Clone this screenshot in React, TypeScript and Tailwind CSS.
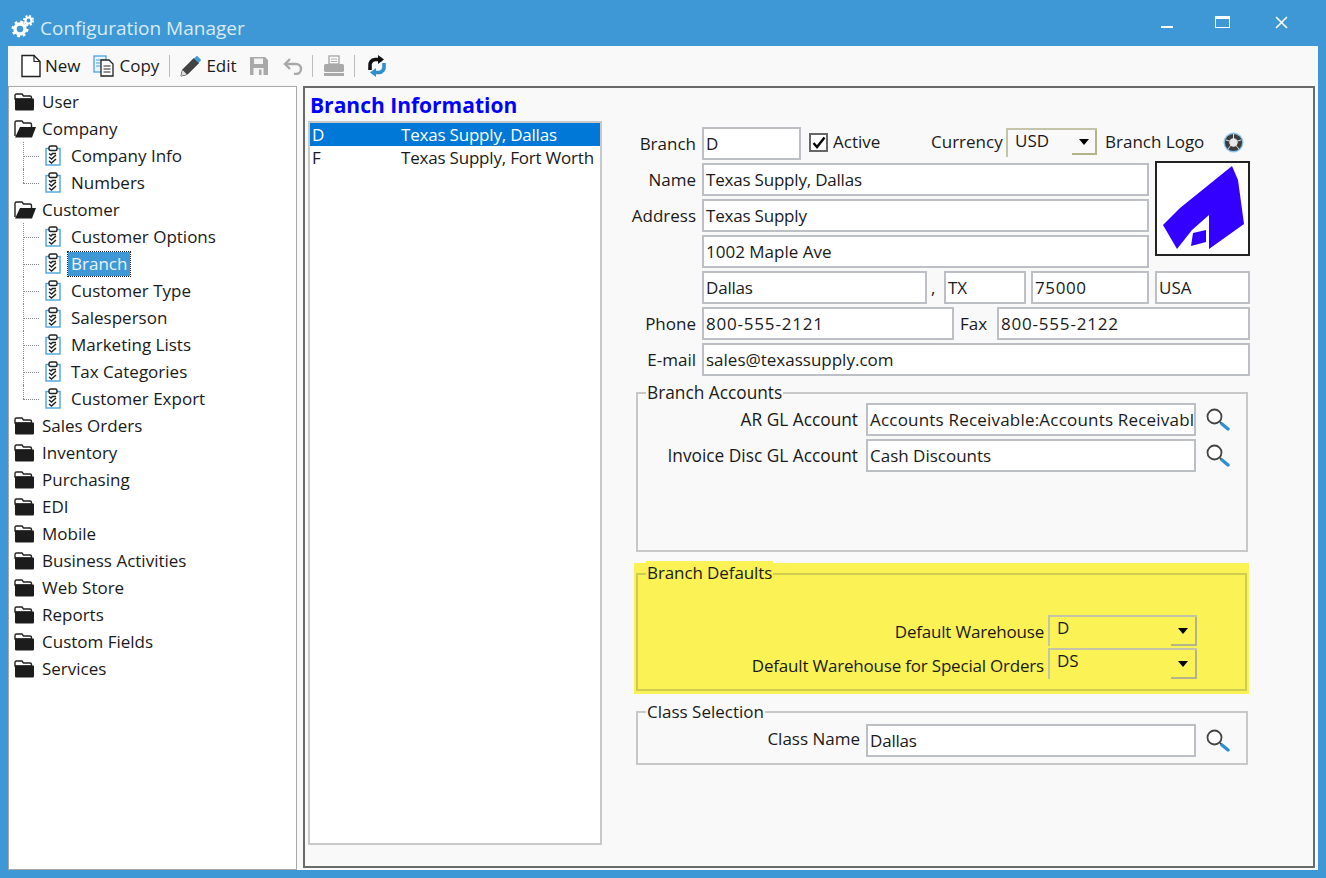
import type { ReactNode } from "react";

const font = { fontFamily: '"Open Sans", "Noto Sans", sans-serif' };

function FolderClosed() {
	return (
		<svg width="21" height="20" viewBox="0 0 21 20" className="shrink-0">
			<path d="M1 5V3.5C1 2.5 1.6 2 2.5 2H8l1.5 2H16c1 0 1.5.5 1.5 1.5V7H1z" fill="#fff" stroke="#222" strokeWidth="1.4" />
			<path d="M1 6.5h18c.6 0 1 .4 1 1V17c0 1-.6 1.5-1.5 1.5h-16C1.6 18.5 1 18 1 17z" fill="#1c1c1c" />
		</svg>
	);
}

function FolderOpen() {
	return (
		<svg width="23" height="20" viewBox="0 0 23 20" className="shrink-0">
			<path d="M1 17V3.5C1 2.5 1.6 2 2.5 2H8l1.5 2H16c1 0 1.5.5 1.5 1.5V8" fill="#fff" stroke="#222" strokeWidth="1.4" />
			<path d="M6 8h16l-4 10.5H1z" fill="#1c1c1c" />
		</svg>
	);
}

function Clipboard() {
	return (
		<svg width="16" height="21" viewBox="0 0 16 21" className="shrink-0">
			<rect x="1" y="3.5" width="14" height="16.5" fill="#fff" stroke="#4aa3df" strokeWidth="1.4" />
			<rect x="4" y="1" width="8" height="4.5" rx="1.5" fill="#fff" stroke="#222" strokeWidth="1.4" />
			<path d="M4 8.5l2 1.5 1.5-1.5h3.5M4 12l2.5 2L11 10M4 16l2.5 2L11 14" fill="none" stroke="#222" strokeWidth="1.5" />
		</svg>
	);
}

function SearchIcon() {
	return (
		<svg width="25" height="25" viewBox="0 0 25 25" className="shrink-0">
			<circle cx="9.5" cy="9.5" r="7" fill="#fff" stroke="#444" strokeWidth="1.8" />
			<path d="M15 15l2.5 2.5" stroke="#444" strokeWidth="2" />
			<path d="M17 17l6 5" stroke="#2f8fd0" strokeWidth="3.4" strokeLinecap="round" />
		</svg>
	);
}

function Gears() {
	return (
		<svg width="23" height="24" viewBox="0 0 23 24" className="mt-[6px]">
			<g fill="none" stroke="#fff">
				<circle cx="9" cy="15" r="5" strokeWidth="3.4" />
				<circle cx="9" cy="15" r="7.2" strokeWidth="2.6" strokeDasharray="2.8 2.85" />
				<circle cx="17.5" cy="6.5" r="3" strokeWidth="2.2" />
				<circle cx="17.5" cy="6.5" r="4.7" strokeWidth="1.8" strokeDasharray="2 1.7" />
			</g>
		</svg>
	);
}

function Sep() {
	return <div className="w-px h-[22px] bg-[#bdbdbd] shrink-0" />;
}

function Toolbar() {
	return (
		<div className="h-10 flex items-center text-[17px] text-[#1a1a1a] shrink-0 pl-3">
			<svg width="22" height="24" viewBox="0 0 22 24">
				<path d="M2 1.5h12l6 6v15H2z" fill="#fff" stroke="#222" strokeWidth="1.4" />
				<path d="M14 1.5v6h6" fill="none" stroke="#222" strokeWidth="1.2" />
			</svg>
			<span className="ml-[3px]">New</span>
			<svg width="22" height="22" viewBox="0 0 22 22" className="ml-[12px]">
				<rect x="1" y="1" width="12" height="16" fill="#eaf4fb" stroke="#4aa3df" strokeWidth="1.3" />
				<path d="M3 5h8M3 8h8M3 11h8" stroke="#4aa3df" />
				<path d="M8 5h8l4 4v12H8z" fill="#fff" stroke="#222" strokeWidth="1.3" />
				<path d="M10.5 11h7M10.5 14h7M10.5 17h7" stroke="#222" />
			</svg>
			<span className="ml-[5px]">Copy</span>
			<div className="ml-[10px]"><Sep /></div>
			<svg width="22" height="23" viewBox="0 0 22 23" className="ml-[9px]">
				<path d="M2 21l1.5-6L15 3.5l4.5 4.5L8 19.5z" fill="#444" stroke="#222" strokeWidth="1" />
				<path d="M15 3.5l1.8-1.8a1.6 1.6 0 0 1 2.3 0l2.2 2.2a1.6 1.6 0 0 1 0 2.3L19.5 8z" fill="#3f9bdc" />
				<path d="M2 21l1.5-6 4.5 4.5z" fill="#ddd" />
			</svg>
			<span className="ml-[5px]">Edit</span>
			<svg width="20" height="20" viewBox="0 0 20 20" className="ml-[12px]">
				<path d="M1 1h15l3 3v15H1z" fill="#a9a9a9" />
				<rect x="5" y="2.5" width="9" height="5.5" fill="#f5f5f5" />
				<rect x="4.5" y="12" width="10" height="7" fill="#f5f5f5" />
				<rect x="10" y="13.5" width="2.5" height="5.5" fill="#a9a9a9" />
			</svg>
			<svg width="20" height="18" viewBox="0 0 20 18" className="ml-[14px]">
				<path d="M7 2L2 7l5 5" fill="none" stroke="#a9a9a9" strokeWidth="2.4" />
				<path d="M2.5 7H13a5 5 0 0 1 0 10H11" fill="none" stroke="#a9a9a9" strokeWidth="2.4" />
			</svg>
			<div className="ml-[9px]"><Sep /></div>
			<svg width="22" height="22" viewBox="0 0 22 22" className="ml-[10px]">
				<rect x="6" y="1" width="10" height="8" fill="#fff" stroke="#a9a9a9" strokeWidth="1.4" />
				<path d="M8 4h6M8 6.5h6" stroke="#a9a9a9" />
				<rect x="1" y="9" width="20" height="8" rx="1.5" fill="#a9a9a9" />
				<rect x="1" y="18" width="20" height="3" fill="#a9a9a9" />
			</svg>
			<div className="ml-[9px]"><Sep /></div>
			<svg width="20" height="22" viewBox="0 0 20 22" className="ml-[12px]">
				<path d="M15 4.5H8a5.5 5.5 0 0 0-5 6.5v4" fill="none" stroke="#111" strokeWidth="3.6" />
				<path d="M11 0l6 4.5-6 4.5z" fill="#111" />
				<path d="M6 17.5h6a5.5 5.5 0 0 0 5-6.5V8" fill="none" stroke="#2f8fd0" strokeWidth="3.6" />
				<path d="M9 13l-6 4.5 6 4.5z" fill="#2f8fd0" />
			</svg>
		</div>
	);
}

function TreeRow({ label, kind, selected, last }: { label: string; kind: "closed" | "open" | "leaf"; selected?: boolean; last?: boolean }) {
	if (kind === "leaf") {
		return (
			<div className="h-[27px] flex items-center relative">
				{/* dotted tree connectors */}
				<div className={`absolute left-[14px] top-0 border-l border-dotted border-[#888] ${last ? "h-[14px]" : "h-[27px]"}`} />
				<div className="absolute left-[14px] top-[14px] w-[16px] border-t border-dotted border-[#888]" />
				<div className="ml-[36px] shrink-0"><Clipboard /></div>
				{selected ? (
					<span className="ml-[7px] px-[3px] leading-[24px] bg-[#3e98d5] text-[#e8f4fc] outline-1 outline-dotted outline-[#222]">{label}</span>
				) : (
					<span className="ml-[10px] leading-[24px]">{label}</span>
				)}
			</div>
		);
	}
	return (
		<div className="h-[27px] flex items-center pl-[5px]">
			<div className="w-[28px] shrink-0">{kind === "open" ? <FolderOpen /> : <FolderClosed />}</div>
			<span>{label}</span>
		</div>
	);
}

function Tree() {
	return (
		<div className="w-[289px] shrink-0 bg-white border border-[#a8a8a8] pt-[1px] text-[17px] text-[#1a1a1a]">
			<TreeRow kind="closed" label="User" />
			<TreeRow kind="open" label="Company" />
			<TreeRow kind="leaf" label="Company Info" />
			<TreeRow kind="leaf" label="Numbers" last />
			<TreeRow kind="open" label="Customer" />
			<TreeRow kind="leaf" label="Customer Options" />
			<TreeRow kind="leaf" label="Branch" selected />
			<TreeRow kind="leaf" label="Customer Type" />
			<TreeRow kind="leaf" label="Salesperson" />
			<TreeRow kind="leaf" label="Marketing Lists" />
			<TreeRow kind="leaf" label="Tax Categories" />
			<TreeRow kind="leaf" label="Customer Export" last />
			<TreeRow kind="closed" label="Sales Orders" />
			<TreeRow kind="closed" label="Inventory" />
			<TreeRow kind="closed" label="Purchasing" />
			<TreeRow kind="closed" label="EDI" />
			<TreeRow kind="closed" label="Mobile" />
			<TreeRow kind="closed" label="Business Activities" />
			<TreeRow kind="closed" label="Web Store" />
			<TreeRow kind="closed" label="Reports" />
			<TreeRow kind="closed" label="Custom Fields" />
			<TreeRow kind="closed" label="Services" />
		</div>
	);
}

function Field({ value, className }: { value?: string; className: string }) {
	return (
		<div className={`h-[33px] shrink-0 bg-white border-2 border-[#bcc0c4] px-[2px] flex items-center overflow-hidden whitespace-nowrap ${className}`}>
			{value}
		</div>
	);
}

function Label({ children, className }: { children: ReactNode; className: string }) {
	return <div className={`shrink-0 text-right whitespace-nowrap ${className}`}>{children}</div>;
}

function Combo({ value, className, btn }: { value: string; className: string; btn: string }) {
	return (
		<div className={`shrink-0 border-l-2 border-t-2 border-[#c4c4a8] flex items-start justify-between relative ${className}`}>
			<span className="pl-[7px] leading-[22px]">{value}</span>
			<div className={`shrink-0 flex items-center justify-center border-r-2 border-b-2 border-[#b4b48c] ${btn}`}>
				<div className="w-0 h-0 border-l-[5px] border-r-[5px] border-t-[6px] border-l-transparent border-r-transparent border-t-black" />
			</div>
		</div>
	);
}

function Group({ title, className, titleClass, children }: { title: string; className: string; titleClass?: string; children?: ReactNode }) {
	return (
		<div className={`relative border-2 border-[#c8c8c8] ${className}`}>
			<span className={`absolute left-[8px] px-[1px] leading-[24px] bg-inherit ${titleClass ?? "-top-[13px]"}`}>{title}</span>
			{children}
		</div>
	);
}

function BranchForm() {
	return (
		<div className="w-[620px] ml-[27px] pt-[39px] text-[17px] text-[#1a1a1a] flex flex-col">
			<div className="flex items-center h-[33px]">
				<Label className="w-[67px]">Branch</Label>
				<Field value="D" className="ml-[6px] w-[99px]" />
				<div className="ml-[8px] -mt-[2px] w-[19px] h-[19px] border-2 border-[#666] bg-white flex items-center justify-center shrink-0">
					<svg width="14" height="13" viewBox="0 0 14 13"><path d="M1.5 7l3.5 4L12.5 1.5" fill="none" stroke="#000" strokeWidth="2.4" /></svg>
				</div>
				<span className="ml-[5px] -mt-[3px] w-[98px] shrink-0">Active</span>
				<span className="shrink-0 -mt-[3px] w-[75px]">Currency</span>
				<Combo value="USD" className="-mt-[2px] h-[29px] w-[91px]" btn="w-[25px] h-[25px]" />
				<span className="ml-[8px] -mt-[3px] w-[118px] shrink-0 whitespace-nowrap">Branch Logo</span>
				<svg width="21" height="21" viewBox="0 0 21 21" className="shrink-0 -mt-[3px]">
					<circle cx="10.5" cy="10.5" r="10" fill="#8cc4ea" />
					<circle cx="10.5" cy="10.5" r="8.6" fill="#3c3c3c" />
					<circle cx="10.5" cy="10.5" r="4.2" fill="#e8e8e8" />
					<path d="M10.5 2v5M18 8l-5 1.5M16 17l-3.5-4M5 17l3-4M3 8l5 1.5" stroke="#ddd" strokeWidth="1" />
				</svg>
			</div>
			<div className="flex mt-[3px]">
				<div className="flex flex-col gap-[3px]">
					<div className="flex items-center">
						<Label className="w-[67px]">Name</Label>
						<Field value="Texas Supply, Dallas" className="ml-[6px] w-[447px] tracking-[-0.2px]" />
					</div>
					<div className="flex items-center">
						<Label className="w-[67px]">Address</Label>
						<Field value="Texas Supply" className="ml-[6px] w-[447px] tracking-[-0.2px]" />
					</div>
					<Field value="1002 Maple Ave" className="ml-[73px] w-[447px]" />
				</div>
				<div className="ml-[6px] -mt-[2px] w-[95px] h-[95px] shrink-0 border-2 border-[#222] bg-white">
					<svg width="91" height="91" viewBox="1157 163 91 91">
						<path d="M1232 166L1238 180L1244 224L1209 249V215L1192 230L1177 249L1163 225L1180 208Z" fill="#3300ff" />
						<path d="M1193 233L1206 230V242L1191 246Z" fill="#3300ff" />
					</svg>
				</div>
			</div>
			<div className="flex items-center ml-[73px] mt-[3px]">
				<Field value="Dallas" className="w-[225px] tracking-[-0.2px]" />
				<span className="w-[17px] pl-[4px] shrink-0">,</span>
				<Field value="TX" className="w-[82px]" />
				<Field value="75000" className="ml-[5px] w-[118px] tracking-[0.6px]" />
				<Field value="USA" className="ml-[6px] w-[95px]" />
			</div>
			<div className="flex items-center mt-[3px]">
				<Label className="w-[67px]">Phone</Label>
				<Field value="800-555-2121" className="ml-[6px] w-[252px] tracking-[0.8px]" />
				<span className="ml-[6px] w-[37px] shrink-0">Fax</span>
				<Field value="800-555-2122" className="w-[253px] tracking-[0.8px]" />
			</div>
			<div className="flex items-center mt-[3px]">
				<Label className="w-[67px]">E-mail</Label>
				<Field value="sales@texassupply.com" className="ml-[6px] w-[548px]" />
			</div>

			<Group title="Branch Accounts" className="mt-[16px] ml-[7px] w-[612px] h-[160px] bg-[#f9f9f9] pt-[9px] text-[17.3px]">
				<div className="flex items-center">
					<Label className="w-[220px]">AR GL Account</Label>
					<Field value="Accounts Receivable:Accounts Receivable" className="ml-[8px] w-[330px] text-[17px] tracking-[0.2px]" />
					<div className="ml-[9px]"><SearchIcon /></div>
				</div>
				<div className="flex items-center mt-[3px]">
					<Label className="w-[220px]">Invoice Disc GL Account</Label>
					<Field value="Cash Discounts" className="ml-[8px] w-[330px] text-[17px]" />
					<div className="ml-[9px]"><SearchIcon /></div>
				</div>
			</Group>

			<div className="mt-[11px] ml-[5px] w-[615px] h-[131px] bg-[#fbf255] pt-[10px] pl-[2px]">
				<Group title="Branch Defaults" titleClass="-top-[14px] tracking-[-0.1px]" className="w-[611px] h-[118px] bg-[#fbf255] !border-[#d0cc50] pt-[40px]">
					<div className="flex items-center h-[31px] tracking-[-0.2px]">
						<Label className="w-[406px] mt-[2px]">Default Warehouse</Label>
						<Combo value="D" className="ml-[4px] h-[31px] w-[149px]" btn="w-[26px] h-[29px]" />
					</div>
					<div className="flex items-center h-[31px] mt-[2px] tracking-[-0.2px]">
						<Label className="w-[406px] mt-[4px]">Default Warehouse for Special Orders</Label>
						<Combo value="DS" className="ml-[4px] h-[31px] w-[149px]" btn="w-[26px] h-[29px]" />
					</div>
				</Group>
			</div>

			<Group title="Class Selection" className="mt-[17px] ml-[7px] w-[612px] h-[54px] bg-[#f9f9f9] pt-[11px]">
				<div className="flex items-center">
					<Label className="w-[222px] -mt-[4px]">Class Name</Label>
					<Field value="Dallas" className="ml-[6px] w-[330px] tracking-[-0.2px]" />
					<div className="ml-[9px]"><SearchIcon /></div>
				</div>
			</Group>
		</div>
	);
}

function BranchList() {
	return (
		<div className="w-[294px] shrink-0 flex flex-col">
			<h1 className="h-[33px] pl-[2px] text-[21px] leading-[35px] font-bold text-[#0000ff] whitespace-nowrap">Branch Information</h1>
			<div className="flex-1 border-2 border-[#c8c8c8] bg-white text-[17px] text-[#1a1a1a] tracking-[-0.2px]">
				<div className="h-[23px] flex items-center bg-[#0078d7] text-white whitespace-nowrap">
					<span className="w-[91px] pl-[2px] shrink-0">D</span>
					<span>Texas Supply, Dallas</span>
				</div>
				<div className="h-[23px] flex items-center whitespace-nowrap">
					<span className="w-[91px] pl-[2px] shrink-0">F</span>
					<span>Texas Supply, Fort Worth</span>
				</div>
			</div>
		</div>
	);
}

export default function App() {
	return (
		<div className="w-[1326px] h-[878px] bg-[#3e98d5] flex flex-col overflow-hidden" style={font}>
			<div className="h-[46px] shrink-0 flex items-center pl-[11px] pr-[38px]">
				<Gears />
				<span className="ml-[6px] mt-[10px] text-[19px] text-[#d8eaf7]">Configuration Manager</span>
				<div className="ml-auto flex items-center text-white">
					<div className="w-3 h-[2.5px] bg-white mt-[8px]" />
					<div className="ml-[42px] w-[15px] h-[12px] border border-white border-t-[3px] -mt-[2px]" />
					<svg width="13" height="13" viewBox="0 0 13 13" className="ml-[45px] -mt-[2px]">
						<path d="M1 1l11 11M12 1L1 12" stroke="#fff" strokeWidth="1.6" />
					</svg>
				</div>
			</div>
			<div className="ml-[8px] mr-[8px] mb-[8px] flex-1 bg-[#f9f9f9] flex flex-col min-h-0">
				<Toolbar />
				<div className="flex-1 flex min-h-0">
					<Tree />
					<div className="ml-[6px] mr-[3px] mb-[2px] flex-1 border-2 border-[#6a6a6a] flex px-[3px] pb-[21px]">
						<BranchList />
						<BranchForm />
					</div>
				</div>
			</div>
		</div>
	);
}
